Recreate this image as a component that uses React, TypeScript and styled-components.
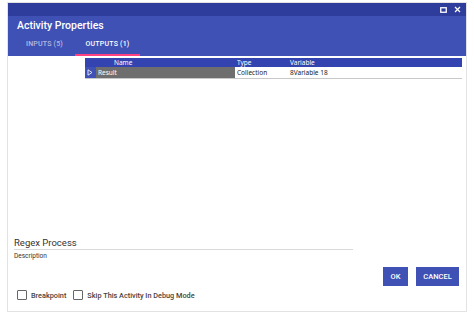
import styled, { createGlobalStyle } from 'styled-components';

const GlobalStyle = createGlobalStyle`
  html, body {
    margin: 0;
    background: #ffffff;
    font-family: Roboto, "Liberation Sans", sans-serif;
  }
`;

const Page = styled.div`
  padding: 2px 7px 0 7px;
`;

const Dialog = styled.div`
  width: 460px;
  height: 310px;
  display: flex;
  flex-direction: column;
  border: 1px solid #e2e2e2;
  box-sizing: border-box;
  background: #fff;
`;

const TitleBar = styled.div`
  height: 13px;
  background: #2e3d9c;
  display: flex;
  justify-content: flex-end;
  align-items: center;
  gap: 7px;
  padding-right: 5px;
  color: #fff;
`;

const Header = styled.div`
  background: #3f51b5;
  height: 40px;
  display: flex;
  flex-direction: column;
`;

const Title = styled.div`
  color: #fff;
  font-size: 10.5px;
  font-weight: 500;
  padding: 3px 0 0 9px;
  height: 16px;
`;

const Tabs = styled.div`
  display: flex;
  padding-left: 6px;
  margin-top: 2px;
`;

const Tab = styled.div<{ $active?: boolean }>`
  font-size: 7px;
  font-weight: 500;
  letter-spacing: 0.2px;
  box-sizing: border-box;
  height: 20px;
  padding-top: 4px;
  color: ${({ $active }) => ($active ? '#ffffff' : 'rgba(255,255,255,0.6)')};
  border-bottom: 2px solid ${({ $active }) => ($active ? '#ff4081' : 'transparent')};
  width: ${({ $active }) => ($active ? '65px' : '61px')};
  text-align: center;
`;

const Body = styled.div`
  flex: 1;
  display: flex;
  flex-direction: column;
  padding: 2px 4px 0 77px;
`;

const Grid = styled.div`
  display: grid;
  grid-template-columns: 11px 139px 53px 1fr;
  font-family: "Noto Sans", "Open Sans", sans-serif;
  font-size: 6.5px;
  border-bottom: 1px solid #c8c8c8;
`;

const HeadCell = styled.div<{ $indent?: number }>`
  background: #3344b0;
  color: #fff;
  height: 9px;
  line-height: 9px;
  padding-left: ${({ $indent }) => $indent ?? 2}px;
`;

const Cell = styled.div<{ $tone?: 'blue' | 'gray' }>`
  height: 11px;
  line-height: 11px;
  padding-left: 2px;
  color: ${({ $tone }) => ($tone ? '#fff' : '#222')};
  background: ${({ $tone }) =>
    $tone === 'blue' ? '#3f51b5' : $tone === 'gray' ? '#6e6e6e' : '#fff'};
  display: flex;
  align-items: center;
`;

const Footer = styled.div`
  padding: 0 7px 11px 6px;
  display: flex;
  flex-direction: column;
`;

const ProcessName = styled.div`
  font-size: 9.5px;
  color: #333;
  width: 339px;
  border-bottom: 1px solid #d9d9d9;
  padding-bottom: 1px;
`;

const Description = styled.div`
  font-size: 6.5px;
  color: #333;
  margin-top: 2px;
`;

const ButtonRow = styled.div`
  display: flex;
  justify-content: flex-end;
  gap: 8px;
  margin-top: 7px;
`;

const Button = styled.div<{ $wide?: boolean }>`
  background: #3f51b5;
  color: #fff;
  font-size: 7.5px;
  font-weight: 500;
  height: 19px;
  line-height: 19px;
  width: ${({ $wide }) => ($wide ? '43px' : '25px')};
  text-align: center;
`;

const Checks = styled.div`
  display: flex;
  align-items: center;
  gap: 7px;
  margin-top: 4px;
  padding-left: 3px;
`;

const Check = styled.label`
  display: flex;
  align-items: center;
  gap: 4px;
  font-size: 7.3px;
  font-weight: 500;
  color: #444;
`;

const Box = styled.span`
  width: 8px;
  height: 8px;
  border: 1px solid #666;
  border-radius: 1px;
`;

export default function App() {
  return (
    <>
      <GlobalStyle />
      <Page>
        <Dialog>
          <TitleBar>
            <svg width="7" height="6" viewBox="0 0 7 6">
              <rect x="0.75" y="0.75" width="5.5" height="4.5" fill="none" stroke="#fff" strokeWidth="1.3" />
            </svg>
            <svg width="7" height="7" viewBox="0 0 7 7">
              <path d="M1 1L6 6M6 1L1 6" stroke="#fff" strokeWidth="1.2" />
            </svg>
          </TitleBar>
          <Header>
            <Title>Activity Properties</Title>
            <Tabs>
              <Tab>INPUTS (5)</Tab>
              <Tab $active>OUTPUTS (1)</Tab>
            </Tabs>
          </Header>
          <Body>
            <Grid>
              <HeadCell />
              <HeadCell $indent={18}>Name</HeadCell>
              <HeadCell>Type</HeadCell>
              <HeadCell>Variable</HeadCell>
              <Cell $tone="blue">
                <svg width="6" height="7" viewBox="0 0 6 7">
                  <path d="M1 0.8L5 3.5L1 6.2Z" fill="none" stroke="#fff" strokeWidth="0.8" />
                </svg>
              </Cell>
              <Cell $tone="gray">Result</Cell>
              <Cell>Collection</Cell>
              <Cell>8Variable 18</Cell>
            </Grid>
          </Body>
          <Footer>
            <ProcessName>Regex Process</ProcessName>
            <Description>Description</Description>
            <ButtonRow>
              <Button>OK</Button>
              <Button $wide>CANCEL</Button>
            </ButtonRow>
            <Checks>
              <Check>
                <Box />
                Breakpoint
              </Check>
              <Check>
                <Box />
                Skip This Activity In Debug Mode
              </Check>
            </Checks>
          </Footer>
        </Dialog>
      </Page>
    </>
  );
}
